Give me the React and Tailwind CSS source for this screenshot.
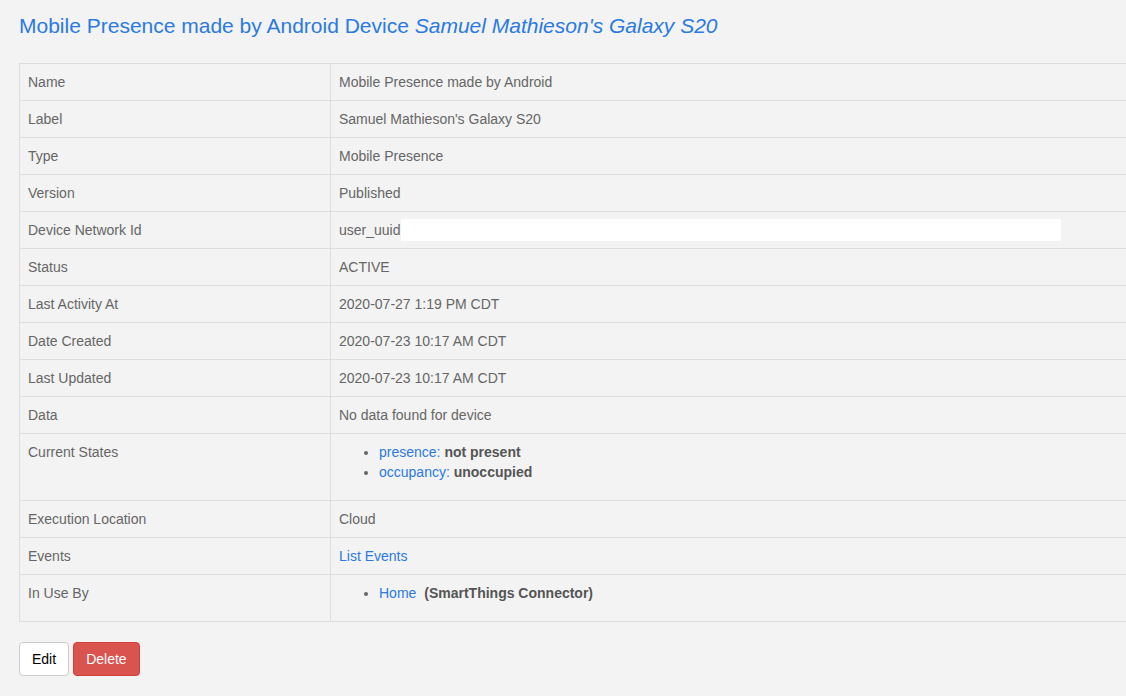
import React from "react";

const rows = [
  ["Name", "Mobile Presence made by Android"],
  ["Label", "Samuel Mathieson's Galaxy S20"],
  ["Type", "Mobile Presence"],
  ["Version", "Published"],
  ["Device Network Id", "uuid"],
  ["Status", "ACTIVE"],
  ["Last Activity At", "2020-07-27 1:19 PM CDT"],
  ["Date Created", "2020-07-23 10:17 AM CDT"],
  ["Last Updated", "2020-07-23 10:17 AM CDT"],
  ["Data", "No data found for device"],
  ["Current States", "states"],
  ["Execution Location", "Cloud"],
  ["Events", "events"],
  ["In Use By", "inuse"],
];

const renderValue = (v) => {
  if (v === "uuid") {
    return (
      <span>
        user_uuid
        <span className="inline-block align-top w-[660px] h-[22px] -my-[1px] bg-white"></span>
      </span>
    );
  }
  if (v === "states") {
    return (
      <ul className="list-disc pl-10 mb-[10px] marker:text-[#666]">
        <li>
          <a className="text-[#2a7ae2]">presence:</a> <b className="text-[#555]">not present</b>
        </li>
        <li>
          <a className="text-[#2a7ae2]">occupancy:</a> <b className="text-[#555]">unoccupied</b>
        </li>
      </ul>
    );
  }
  if (v === "events") {
    return <a className="text-[#2a7ae2]">List Events</a>;
  }
  if (v === "inuse") {
    return (
      <ul className="list-disc pl-10 mb-[10px]">
        <li>
          <a className="text-[#2a7ae2]">Home</a>{"  "}
          <b className="text-[#555] ml-[4px]">(SmartThings Connector)</b>
        </li>
      </ul>
    );
  }
  return v;
};

export default function App() {
  return (
    <div className="min-h-[696px] w-[1126px] overflow-hidden bg-[#f3f3f3] px-[19px] pt-[13px] pb-5 font-['Liberation_Sans',Arial,sans-serif] text-[14px] leading-[20px] text-[#666]">
      <h3 className="text-[21px] leading-[26px] text-[#2a7ae2] mb-[24px] whitespace-nowrap">
        Mobile Presence made by Android Device <i>Samuel Mathieson's Galaxy S20</i>
      </h3>
      <table className="w-[1120px] border-collapse border border-[#ddd] mb-5">
        <tbody>
          {rows.map(([k, v]) => (
            <tr key={k} className="border-t border-[#ddd]">
              <td className="w-[311px] border border-[#ddd] p-2 align-top">{k}</td>
              <td className="border border-[#ddd] p-2 align-top">{renderValue(v)}</td>
            </tr>
          ))}
        </tbody>
      </table>
      <div className="flex gap-1">
        <button className="h-[34px] rounded-[4px] border border-[#ccc] bg-white px-3 text-black">Edit</button>
        <button className="h-[34px] rounded-[4px] border border-[#d43f3a] bg-[#d9534f] px-3 text-white">Delete</button>
      </div>
    </div>
  );
}
